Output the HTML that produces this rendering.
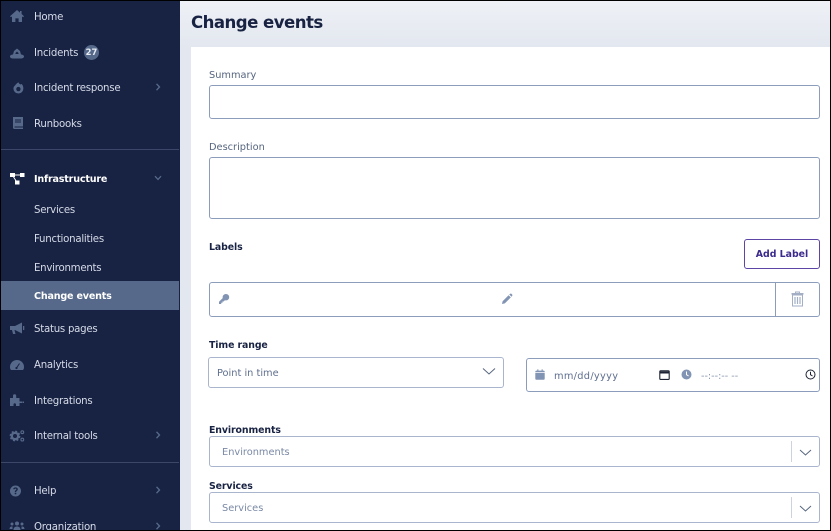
<!DOCTYPE html>
<html lang="en"><head><meta charset="utf-8"><title>Change events</title>
<style>
*{box-sizing:border-box}
html,body{margin:0;padding:0;width:831px;height:531px;overflow:hidden;background:#fff}
body{font-family:"DejaVu Sans","Liberation Sans",sans-serif;position:relative}
.a{position:absolute}
#side{left:1px;top:1px;width:179px;height:529px;background:#182242}
.n{position:absolute;left:34px;font-size:10.2px;line-height:14px;color:#d5dbe8;white-space:nowrap;transform:translateY(-3px);letter-spacing:-.25px}
.b{font-weight:700;color:#fff;font-size:9.6px;letter-spacing:-.2px}
.s{position:absolute;left:1px;width:178px;height:1px;background:#3b4668}
.i{position:absolute;left:9px;width:16px;height:16px;transform:translateY(-8px);fill:#56698a}
.c{position:absolute;left:155px;width:6px;height:8px;transform:translateY(-4px);fill:none;stroke:#56698a;stroke-width:1.4}
#bg{left:180px;top:1px;width:650px;height:529px;background:linear-gradient(#eef1f6 0,#e3e7ef 46px,#e3e7ef 100%)}
#main{left:191px;top:47px;width:639px;height:483px;background:#fff}
h1{position:absolute;left:191px;top:12px;margin:0;font-size:16.6px;line-height:22px;font-weight:700;color:#182242;white-space:nowrap;letter-spacing:-.55px}
.l{position:absolute;left:209px;font-size:9.8px;line-height:14px;color:#56657f;white-space:nowrap;transform:translateY(4px)}
.lb{font-weight:700;color:#182242;font-size:9.4px;letter-spacing:-.1px}
.f{position:absolute;background:#fff;border:1px solid #8c9dbc;border-radius:3px}
.g{border-color:#a9b5cc}
.t{position:absolute;font-size:9.8px;line-height:14px;color:#5f6f8f;white-space:nowrap;transform:translateY(4px)}
</style></head>
<body>
<div class="a" style="left:0;top:0;width:831px;height:531px;background:#000"></div>
<div class="a" id="side"></div>
<div class="a" id="bg"></div>
<div class="a" id="main"></div>

<svg class="i" style="top:16px" viewBox="0 0 16 16"><path d="M8 2 L1 8.2 L2 9.2 L3 8.4 V14 H6.4 V10.4 H9.6 V14 H13 V8.4 L14 9.2 L15 8.2 L12.6 6 V3 H11 V4.6Z"/></svg>
<div class="n" style="top:14px">Home</div>
<svg class="i" style="top:52px" viewBox="0 0 16 16"><path d="M1 12.5 C1 11 3 10.5 4 10.5 L5 7 L8 4.5 L11 7 L12 10.5 C13 10.5 15 11 15 12.5 C15 14 13 14.5 12 14.5 H4 C3 14.5 1 14 1 12.5Z"/><path d="M6.5 9 L8 7.5 L9.5 9 V10 H6.5Z" fill="#182242"/></svg>
<div class="n" style="top:50px">Incidents</div>
<div class="a" style="left:84px;top:45px;width:15px;height:15px;border-radius:50%;background:#56698a;color:#e8ecf3;font-size:8.4px;font-weight:700;line-height:15px;text-align:center">27</div>
<svg class="i" style="top:88px" viewBox="0 0 16 16"><g transform="translate(2.2 .5) scale(.9)"><path d="M8 2 C8.5 3.5 9.5 4 10.5 4.5 L11.5 3.8 C13 5.2 13.5 7 13.5 9 A5.5 5.5 0 0 1 2.5 9 C2.5 6.5 5 5 6 3.5Z"/><circle cx="8" cy="9.5" r="2.4" fill="#182242"/></g></svg>
<div class="n" style="top:85px">Incident response</div>
<svg class="c" style="top:87px" viewBox="0 0 6 8"><path d="M1.5 .8 L4.5 4 L1.5 7.2"/></svg>
<svg class="i" style="top:123px;left:10px" viewBox="0 0 16 16"><path d="M3 2 H13 V14 H4.5 A1.5 1.5 0 0 1 3 12.5Z"/><path d="M5 5 H11 M5 7 H11 M4.5 12 H13" stroke="#182242" stroke-width=".9"/></svg>
<div class="n" style="top:121px">Runbooks</div>
<div class="s" style="top:149px"></div>

<svg class="i" style="top:178px;fill:#fff" viewBox="0 0 16 16"><rect x="1" y="3" width="5" height="4"/><rect x="11" y="3" width="4.5" height="4"/><rect x="6" y="10.5" width="4.5" height="4"/><path d="M5 4.5 H12 V5.5 H5Z M4.5 6 L8 11.5 L7.2 12 L3.8 6.6Z"/></svg>
<div class="n b" style="top:176px">Infrastructure</div>
<svg class="a" style="left:154px;top:175px;width:8px;height:6px;fill:none;stroke:#56698a;stroke-width:1.3" viewBox="0 0 8 6"><path d="M1 1.2 L4 4.4 L7 1.2"/></svg>
<div class="n" style="top:207px">Services</div>
<div class="n" style="top:236px">Functionalities</div>
<div class="n" style="top:265px">Environments</div>
<div class="a" style="left:1px;top:281px;width:178px;height:29px;background:#56698a"></div>
<div class="n b" style="top:293px">Change events</div>
<svg class="i" style="top:328px" viewBox="0 0 16 16"><path d="M1 6 H6 L13 2.5 V13.5 L6 10 H5.5 L6.5 14 H4 L3 10 H1Z"/><path d="M14 6 H15.3 V10 H14Z"/></svg>
<div class="n" style="top:326px">Status pages</div>
<svg class="i" style="top:365px" viewBox="0 0 16 16"><path d="M8 3 A7 7 0 0 0 1 10 C1 11.3 1.3 12.3 2 13 H14 C14.7 12.3 15 11.3 15 10 A7 7 0 0 0 8 3Z"/><path d="M7.5 11 L10.5 6.5" stroke="#182242" stroke-width="1"/><circle cx="7.5" cy="11" r="1.1" fill="#182242"/></svg>
<div class="n" style="top:362px">Analytics</div>
<svg class="i" style="top:400px" viewBox="0 0 16 16"><path d="M1 6 H4 V3.8 A1.6 1.6 0 0 1 7.2 3.8 V6 H10.5 V9.5 H13 V11 H10.5 V14 H7 V12.5 A1.2 1.2 0 0 0 4.5 12.5 V14 H1Z"/><rect x="13.4" y="9.5" width="1.6" height="1.5"/></svg>
<div class="n" style="top:398px">Integrations</div>
<svg class="i" style="top:436px" viewBox="0 0 16 16"><circle cx="6" cy="8" r="3.2" fill="none" stroke="#56698a" stroke-width="2.4"/><circle cx="6" cy="8" r="4.7" fill="none" stroke="#56698a" stroke-width="1.4" stroke-dasharray="2 1.7"/><circle cx="13.3" cy="4.2" r="1.4" fill="none" stroke="#56698a" stroke-width="1.1"/><circle cx="13.3" cy="11.6" r="1.4" fill="none" stroke="#56698a" stroke-width="1.1"/></svg>
<div class="n" style="top:433px">Internal tools</div>
<svg class="c" style="top:435px" viewBox="0 0 6 8"><path d="M1.5 .8 L4.5 4 L1.5 7.2"/></svg>
<div class="s" style="top:462px"></div>
<svg class="i" style="top:491px" viewBox="0 0 16 16"><path fill-rule="evenodd" d="M6.5 2.5 A5.5 5.5 0 1 0 6.5 13.5 A5.5 5.5 0 1 0 6.5 2.5Z M5.8 9 H7.2 C7.2 7.8 8.8 7.6 8.8 6.2 C8.8 5 7.8 4.4 6.5 4.4 C5.3 4.4 4.3 5 4.2 6.3 H5.6 C5.7 5.8 6 5.6 6.5 5.6 C7 5.6 7.4 5.8 7.4 6.3 C7.4 7.1 5.8 7.4 5.8 9Z M5.7 9.8 H7.3 V11.3 H5.7Z"/></svg>
<div class="n" style="top:488px">Help</div>
<svg class="c" style="top:490px" viewBox="0 0 6 8"><path d="M1.5 .8 L4.5 4 L1.5 7.2"/></svg>
<svg class="i" style="top:526px" viewBox="0 0 16 16"><circle cx="8" cy="5.5" r="2"/><circle cx="3" cy="6" r="1.5"/><circle cx="13" cy="6" r="1.5"/><path d="M4.5 12 C4.5 9.5 6 8.5 8 8.5 C10 8.5 11.5 9.5 11.5 12Z M.5 11 C.5 9.2 1.5 8.3 3.5 8.5 L3.5 11Z M15.5 11 C15.5 9.2 14.5 8.3 12.5 8.5 L12.5 11Z"/></svg>
<div class="n" style="top:524px">Organization</div>
<svg class="c" style="top:526px" viewBox="0 0 6 8"><path d="M1.5 .8 L4.5 4 L1.5 7.2"/></svg>
<div class="a" style="left:0;top:530px;width:831px;height:1px;background:#000"></div>

<h1>Change events</h1>

<div class="l" style="top:65px">Summary</div>
<div class="f" style="left:209px;top:85px;width:611px;height:34px"></div>
<div class="l" style="top:137px">Description</div>
<div class="f" style="left:209px;top:157px;width:611px;height:62px"></div>
<div class="l lb" style="top:237px">Labels</div>
<div class="a" style="left:744px;top:239px;width:76px;height:30px;background:#fff;border:1px solid #5c45a5;border-radius:3px;color:#3c2a8c;font-size:9.4px;font-weight:700;line-height:30px;text-align:center;white-space:nowrap">Add Label</div>
<div class="f" style="left:209px;top:282px;width:611px;height:35px"></div>
<div class="a" style="left:775px;top:282px;width:1px;height:35px;background:#8c9dbc"></div>
<svg class="a" style="left:218px;top:293px;width:12px;height:12px;fill:#8294b4" viewBox="0 0 12 12"><path d="M8 1 A3.2 3.2 0 0 1 8 7.4 C7.6 7.4 7.2 7.3 6.9 7.2 L5.6 8.5 H4.5 V9.8 H3.2 V11 H1 V8.8 L4.8 5 C4.7 4.7 4.6 4.5 4.6 4.2 A3.2 3.2 0 0 1 8 1Z"/></svg>
<svg class="a" style="left:501px;top:293px;width:12px;height:12px;fill:#8294b4" viewBox="0 0 12 12"><path d="M1 11 L1.6 8.2 L7.6 2.2 L9.8 4.4 L3.8 10.4Z M8.3 1.5 L9.2 .8 C9.6 .5 10 .5 10.4 .8 L11.2 1.6 C11.5 2 11.5 2.4 11.2 2.8 L10.5 3.7Z"/></svg>
<svg class="a" style="left:790px;top:291px;width:15px;height:16px;fill:none;stroke:#a3afc5;stroke-width:1" viewBox="0 0 15 16"><path d="M2.5 4 H12.5 V15 H2.5Z"/><path d="M1.5 2.8 H13.5" stroke-width="1.6"/><path d="M5.5 2.5 V1 H9.5 V2.5"/><path d="M5 6 V13 M7.5 6 V13 M10 6 V13" stroke-width="1.2"/></svg>

<div class="l lb" style="top:335px">Time range</div>
<div class="f g" style="left:208px;top:357px;width:296px;height:31px"></div>
<div class="t" style="left:217px;top:363px">Point in time</div>
<svg class="a" style="left:482px;top:367px;width:14px;height:9px;fill:none;stroke:#56657f;stroke-width:1" viewBox="0 0 14 9"><path d="M1 1.5 L7 7 L13 1.5"/></svg>

<div class="f" style="left:526px;top:358px;width:294px;height:34px"></div>
<svg class="a" style="left:535px;top:369px;width:10px;height:11px;fill:#8294b4" viewBox="0 0 10 11"><path d="M.3 4 H9.7 V9.7 A1 1 0 0 1 8.7 10.7 H1.3 A1 1 0 0 1 .3 9.7Z M1.3 1.6 H2.3 V.4 H3.4 V1.6 H6.6 V.4 H7.7 V1.6 H8.7 A1 1 0 0 1 9.7 2.6 V3.3 H.3 V2.6 A1 1 0 0 1 1.3 1.6Z"/></svg>
<div class="t" style="left:554px;top:366px;letter-spacing:.3px">mm/dd/yyyy</div>
<svg class="a" style="left:659px;top:369px;width:11px;height:11px;fill:none;stroke:#1c2233;stroke-width:1.1" viewBox="0 0 11 11"><rect x=".8" y="1.8" width="9.4" height="8.6" rx=".8"/><path d="M.8 3.5 H10.2" stroke-width="2"/></svg>
<svg class="a" style="left:681px;top:369px;width:11px;height:11px" viewBox="0 0 11 11"><circle cx="5.5" cy="5.5" r="5" fill="#8294b4"/><path d="M5.5 2.5 V5.7 L7.6 7" fill="none" stroke="#fff" stroke-width="1"/></svg>
<div class="t" style="left:701px;top:366px;font-size:9.6px;color:#8a97af">--:--:-- --</div>
<svg class="a" style="left:805px;top:369px;width:11px;height:11px;fill:none;stroke:#1c2233;stroke-width:1" viewBox="0 0 11 11"><circle cx="5.5" cy="5.5" r="4.5"/><path d="M5.5 2.8 V5.7 L7.5 7"/></svg>

<div class="l lb" style="top:420px">Environments</div>
<div class="f g" style="left:209px;top:436px;width:611px;height:31px"></div>
<div class="t" style="left:222px;top:442px;color:#7a89a6">Environments</div>
<div class="a" style="left:791px;top:441px;width:1px;height:21px;background:#ccd3e0"></div>
<svg class="a" style="left:799px;top:449px;width:13px;height:7px;fill:none;stroke:#56657f;stroke-width:1" viewBox="0 0 13 7"><path d="M1 1 L6.5 6 L12 1"/></svg>

<div class="l lb" style="top:476px">Services</div>
<div class="f g" style="left:209px;top:492px;width:611px;height:31px"></div>
<div class="t" style="left:222px;top:498px;color:#7a89a6">Services</div>
<div class="a" style="left:791px;top:497px;width:1px;height:21px;background:#ccd3e0"></div>
<svg class="a" style="left:799px;top:505px;width:13px;height:7px;fill:none;stroke:#56657f;stroke-width:1" viewBox="0 0 13 7"><path d="M1 1 L6.5 6 L12 1"/></svg>
</body></html>
